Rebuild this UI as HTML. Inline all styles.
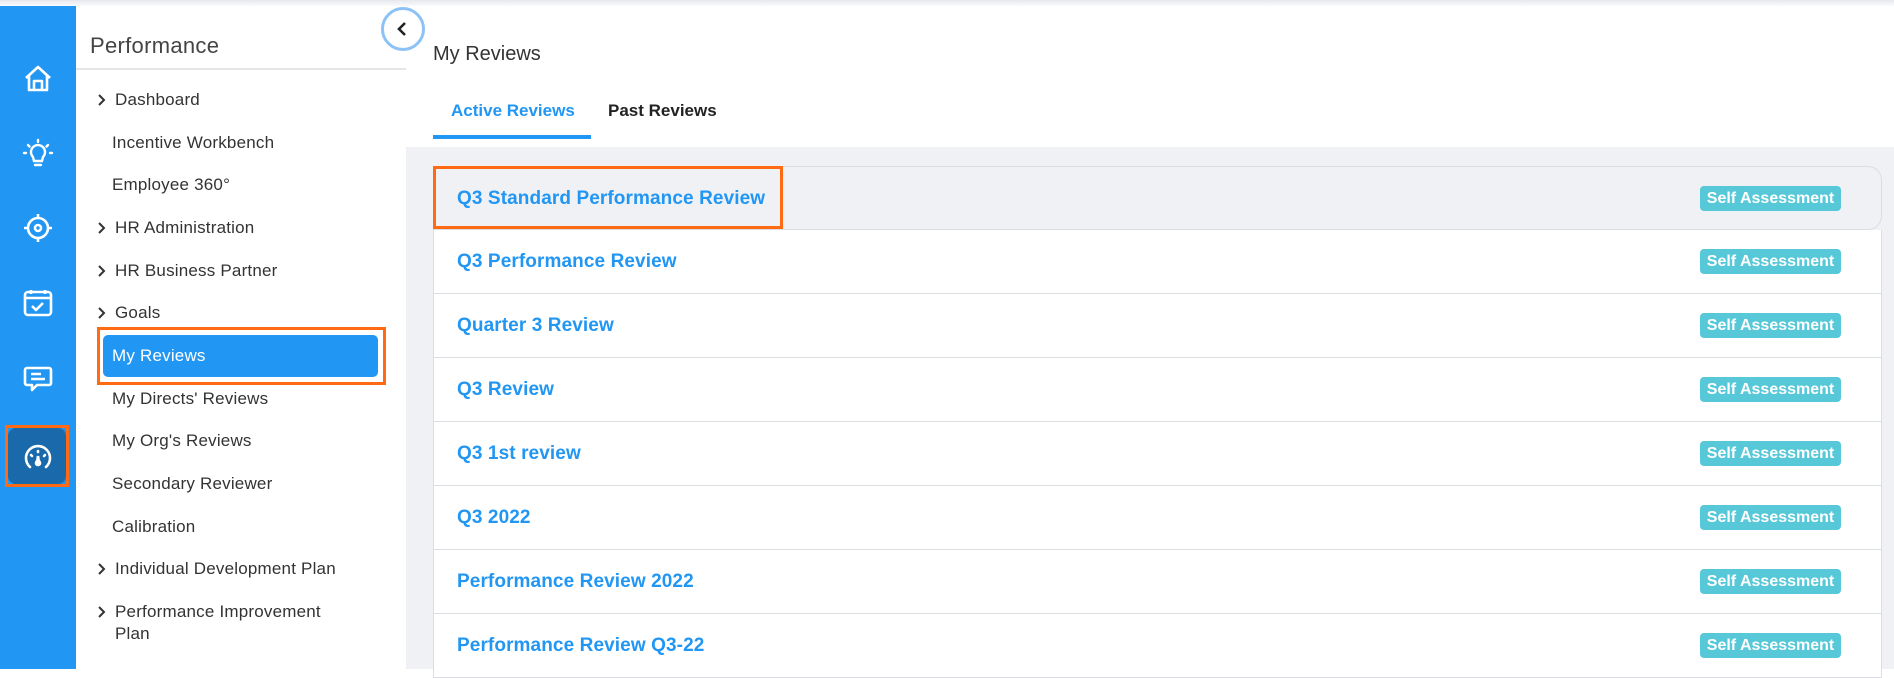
<!DOCTYPE html>
<html><head><meta charset="utf-8"><style>
*{box-sizing:border-box;margin:0;padding:0}
body{width:1894px;height:669px;overflow:hidden;background:#fff;font-family:"Liberation Sans",sans-serif;position:relative}
.top{position:absolute;left:0;top:0;width:1894px;height:6px;background:linear-gradient(#e6e8ee,#fafbfc)}
.rail{position:absolute;left:0;top:6px;width:76px;height:663px;background:#2196f3}
.ic{position:absolute;left:22px;width:32px;height:32px}
.side{position:absolute;left:76px;top:6px;width:330px;height:663px;background:#fff}
.ptitle{position:absolute;left:90px;top:32px;font-size:22px;line-height:28px;color:#444;letter-spacing:.3px}
.hr{position:absolute;left:76px;top:68px;width:330px;height:2px;background:#e6e6e6}
.mi{position:absolute;font-size:17px;line-height:22px;color:#333;letter-spacing:.2px}
.ch{position:absolute;left:97px;width:9px;height:12px}
.sel{position:absolute;left:103px;top:335px;width:275px;height:42px;background:#2196f3;border-radius:5px}
.gray{position:absolute;left:406px;top:147px;width:1488px;height:522px;background:#f0f1f5}
.mh{position:absolute;left:433px;top:42px;font-size:20px;line-height:24px;color:#333}
.tab{position:absolute;top:100px;font-size:17px;line-height:22px;font-weight:bold}
.row{position:absolute;left:433px;width:1449px;height:64px;background:#fff;border:1px solid #dcdde2;border-top:none}
.row .t{position:absolute;left:23px;top:20px;font-size:19px;line-height:24px;color:#2196f3;font-weight:bold;letter-spacing:.1px}
.row .b{position:absolute;left:1266px;top:19px;width:141px;height:25px;background:#56c8d8;border-radius:4px;color:#fff;font-weight:bold;font-size:16px;text-align:center;line-height:25px}
</style></head><body>
<div class="top"></div>
<div class="rail">
<svg class="ic" style="top:57px" viewBox="0 0 32 32" fill="none" stroke="#fff" stroke-width="2.6" stroke-linejoin="round"><path d="M4 15L16 4l12 11M7 13v14h18V13"/><path d="M12 27v-9h8v9"/></svg>
<svg class="ic" style="top:131px" viewBox="0 0 32 32" fill="none" stroke="#fff" stroke-width="2.4" stroke-linecap="round"><path d="M11 20a7 7 0 1 1 10 0l-1 4h-8z"/><path d="M13 28h6M16 3v2M6 8l1.5 1.5M26 8l-1.5 1.5M2 16h2M28 16h2"/></svg>
<svg class="ic" style="top:206px" viewBox="0 0 32 32" fill="none" stroke="#fff" stroke-width="2.6"><circle cx="16" cy="16" r="10"/><circle cx="16" cy="16" r="3"/><path d="M16 2v5M16 25v5M2 16h5M25 16h5"/></svg>
<svg class="ic" style="top:282px" viewBox="0 0 32 32" fill="none" stroke="#fff" stroke-width="2.6" stroke-linejoin="round"><rect x="3" y="4" width="26" height="23" rx="3"/><path d="M3 10h26M10 18l4 4 7-7M9 2v4M23 2v4"/></svg>
<svg class="ic" style="top:357px" viewBox="0 0 32 32" fill="none" stroke="#fff" stroke-width="2.6" stroke-linejoin="round"><path d="M5 5h22a2 2 0 0 1 2 2v13a2 2 0 0 1-2 2H15l-5 5v-5H5a2 2 0 0 1-2-2V7a2 2 0 0 1 2-2z"/><path d="M9 11h10M9 16h14"/></svg>
<div style="position:absolute;left:5px;top:419px;width:64px;height:62px;border:3px solid #ff6a13"></div>
<div style="position:absolute;left:8px;top:422px;width:58px;height:56px;background:#1a69ab;border-radius:8px"></div>
<svg class="ic" style="top:435px" viewBox="0 0 32 32" fill="none" stroke="#fff" stroke-width="2.6" stroke-linecap="round"><path d="M8 26a12 12 0 1 1 16 0"/><path d="M16 10v1M9 14l1 1M23 14l-1 1M16 15l-1 7h2z"/><circle cx="16" cy="22" r="2" fill="#fff"/></svg>
</div>
<div class="side"></div>
<div class="ptitle">Performance</div>
<div class="hr"></div>
<div class="gray"></div>
<svg class="ch" style="top:94px" viewBox="0 0 9 12"><path d="M2 1l5 5-5 5" fill="none" stroke="#333" stroke-width="2"/></svg><div class="mi" style="left:115px;top:89px">Dashboard</div>
<div class="mi" style="left:112px;top:132px">Incentive Workbench</div>
<div class="mi" style="left:112px;top:174px">Employee 360°</div>
<svg class="ch" style="top:222px" viewBox="0 0 9 12"><path d="M2 1l5 5-5 5" fill="none" stroke="#333" stroke-width="2"/></svg><div class="mi" style="left:115px;top:217px">HR Administration</div>
<svg class="ch" style="top:265px" viewBox="0 0 9 12"><path d="M2 1l5 5-5 5" fill="none" stroke="#333" stroke-width="2"/></svg><div class="mi" style="left:115px;top:260px">HR Business Partner</div>
<svg class="ch" style="top:307px" viewBox="0 0 9 12"><path d="M2 1l5 5-5 5" fill="none" stroke="#333" stroke-width="2"/></svg><div class="mi" style="left:115px;top:302px">Goals</div>
<div style="position:absolute;left:97px;top:327px;width:289px;height:58px;border:3px solid #ff6a13"></div>
<div class="sel"></div>
<div class="mi" style="left:112px;top:345px;color:#fff">My Reviews</div>
<div class="mi" style="left:112px;top:388px">My Directs' Reviews</div>
<div class="mi" style="left:112px;top:430px">My Org's Reviews</div>
<div class="mi" style="left:112px;top:473px">Secondary Reviewer</div>
<div class="mi" style="left:112px;top:516px">Calibration</div>
<svg class="ch" style="top:563px" viewBox="0 0 9 12"><path d="M2 1l5 5-5 5" fill="none" stroke="#333" stroke-width="2"/></svg><div class="mi" style="left:115px;top:558px">Individual Development Plan</div>
<svg class="ch" style="top:606px" viewBox="0 0 9 12"><path d="M2 1l5 5-5 5" fill="none" stroke="#333" stroke-width="2"/></svg><div class="mi" style="left:115px;top:601px">Performance Improvement<br>Plan</div>
<div style="position:absolute;left:381px;top:7px;width:44px;height:44px;border-radius:50%;background:#fff;border:3px solid #8cc2f5"></div>
<svg style="position:absolute;left:395px;top:21px" width="14" height="16" viewBox="0 0 14 16"><path d="M10 2L4 8l6 6" fill="none" stroke="#222" stroke-width="2.6"/></svg>
<div class="mh">My Reviews</div>
<div class="tab" style="left:451px;color:#2196f3">Active Reviews</div>
<div class="tab" style="left:608px;color:#222">Past Reviews</div>
<div style="position:absolute;left:433px;top:135px;width:158px;height:4px;background:#2196f3"></div>
<div class="row" style="top:166px;background:#f0f1f5;border-top:1px solid #dcdde2;border-radius:0 14px 14px 0;height:64px"><div class="t">Q3 Standard Performance Review</div><div class="b">Self Assessment</div></div>
<div style="position:absolute;left:433px;top:166px;width:350px;height:63px;border:3px solid #ff6a13"></div>
<div class="row" style="top:230px"><div class="t">Q3 Performance Review</div><div class="b">Self Assessment</div></div>
<div class="row" style="top:294px"><div class="t">Quarter 3 Review</div><div class="b">Self Assessment</div></div>
<div class="row" style="top:358px"><div class="t">Q3 Review</div><div class="b">Self Assessment</div></div>
<div class="row" style="top:422px"><div class="t">Q3 1st review</div><div class="b">Self Assessment</div></div>
<div class="row" style="top:486px"><div class="t">Q3 2022</div><div class="b">Self Assessment</div></div>
<div class="row" style="top:550px"><div class="t">Performance Review 2022</div><div class="b">Self Assessment</div></div>
<div class="row" style="top:614px"><div class="t">Performance Review Q3-22</div><div class="b">Self Assessment</div></div>
</body></html>
